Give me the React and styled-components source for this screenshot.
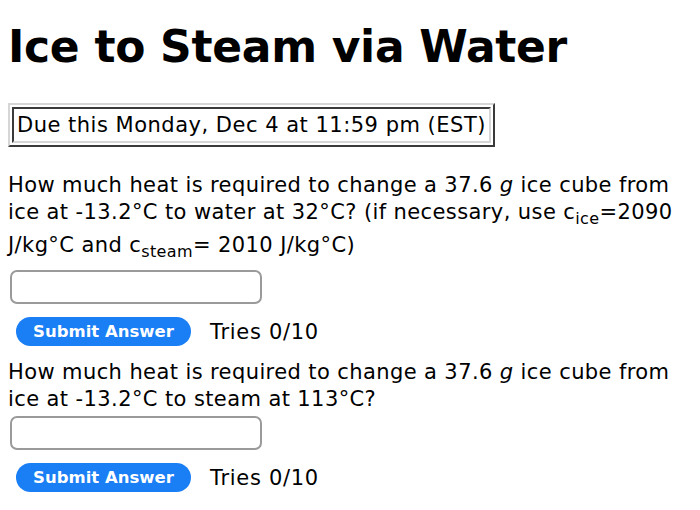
import React from 'react';
import styled, { createGlobalStyle } from 'styled-components';

const GlobalStyle = createGlobalStyle`
  body {
    margin: 0;
    background: #ffffff;
    color: #000000;
    font-family: "DejaVu Sans", Verdana, sans-serif;
  }
`;

const Page = styled.div`
  padding: 0 8px;
`;

const Title = styled.h1`
  font-size: 44px;
  font-weight: bold;
  letter-spacing: -0.3px;
  margin: 21px 0 31px;
  line-height: 51px;
`;

const DueFrame = styled.div`
  width: fit-content;
  padding: 2px;
  border: 2px solid;
  border-color: #d6d6d6 #3a3a3a #3a3a3a #d6d6d6;
`;

const DueCell = styled.div`
  border: 2px solid;
  border-color: #3a3a3a #d6d6d6 #d6d6d6 #3a3a3a;
  padding: 2px 3px;
  font-size: 21px;
  letter-spacing: 0.5px;
  line-height: 28px;
`;

const Question = styled.div`
  margin-top: ${p => p.$top}px;
`;

const Prompt = styled.p`
  margin: 0;
  font-size: 21px;
  letter-spacing: 0.4px;
  line-height: ${p => p.$lh}px;
`;

const Sub = styled.sub`
  font-size: 16px;
`;

const AnswerInput = styled.input`
  display: block;
  box-sizing: border-box;
  width: 252px;
  height: 34px;
  margin: ${p => p.$top}px 0 0 2px;
  border: 2px solid #9a9a9a;
  border-radius: 7px;
  background: #fff;
  font-size: 18px;
  font-family: inherit;
`;

const SubmitRow = styled.div`
  display: flex;
  align-items: center;
  gap: 19px;
  margin: 13px 0 0 8px;
`;

const SubmitButton = styled.button`
  box-sizing: border-box;
  width: 175px;
  height: 29px;
  border: none;
  border-radius: 15px;
  background: #1a7ef5;
  color: #ffffff;
  font-family: "DejaVu Sans", Verdana, sans-serif;
  font-weight: bold;
  font-size: 16.5px;
  padding: 0;
`;

const Tries = styled.span`
  font-size: 21px;
  letter-spacing: 0.7px;
`;

const questions = [
  {
    top: 25,
    lh: 27,
    inputTop: 5,
    text: (
      <>
        How much heat is required to change a 37.6 <i>g</i> ice cube from ice at -13.2°C to water at 32°C? (if
        necessary, use c<Sub>ice</Sub>=2090 J/kg°C and c<Sub>steam</Sub>= 2010 J/kg°C)
      </>
    ),
  },
  {
    top: 13,
    lh: 27,
    inputTop: 3,
    text: (
      <>
        How much heat is required to change a 37.6 <i>g</i> ice cube from ice at -13.2°C to steam at 113°C?
      </>
    ),
  },
];

export default function App() {
  return (
    <Page>
      <GlobalStyle />
      <Title>Ice to Steam via Water</Title>
      <DueFrame>
        <DueCell>Due this Monday, Dec 4 at 11:59 pm (EST)</DueCell>
      </DueFrame>
      {questions.map((q, i) => (
        <Question key={i} $top={q.top}>
          <Prompt $lh={q.lh}>{q.text}</Prompt>
          <AnswerInput $top={q.inputTop} />
          <SubmitRow>
            <SubmitButton>Submit Answer</SubmitButton>
            <Tries>Tries 0/10</Tries>
          </SubmitRow>
        </Question>
      ))}
    </Page>
  );
}
